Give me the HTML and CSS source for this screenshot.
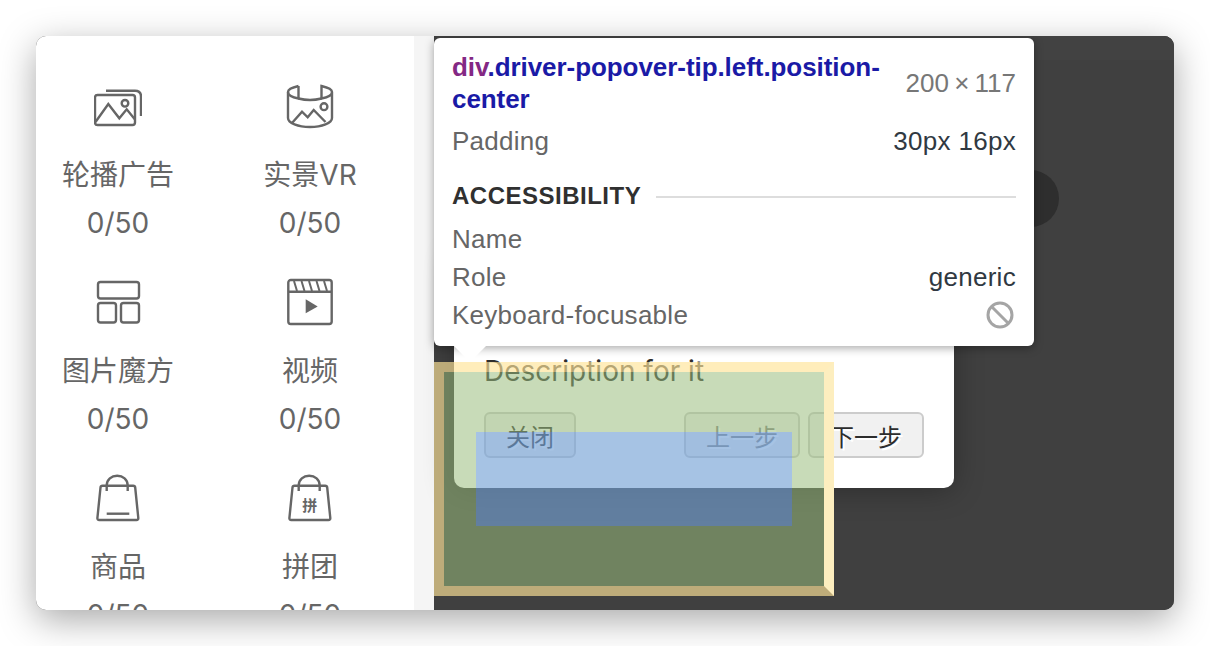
FILE: index.html
```html
<!DOCTYPE html>
<html lang="zh">
<head>
<meta charset="utf-8">
<title>Driver popover inspector</title>
<link rel="stylesheet" href="styles.css">
</head>
<body>
<div class="window">
  <aside class="sidebar">
    <div class="item">
      <svg class="icon" viewBox="0 0 48 48"><rect x="1" y="13" width="40" height="30" rx="2.5"/><path d="M12 8.7H41Q47 8.7 47 14.5V34"/><path d="M1.5 40L14.3 22L25.3 36.3L32.7 27.3L41 37.5"/><circle cx="31" cy="21.3" r="3.3"/></svg>
      <div class="label">轮播广告</div><div class="count">0/50</div>
    </div>
    <div class="item">
      <svg class="icon" viewBox="0 0 48 48"><path d="M12.5 4C6 5.5 2 7.5 2 10V36C2 41 12 45 24 45S46 41 46 36V10C46 7.5 42 5.5 35.5 4V16.5C41 15.5 46 13 46 10"/><path d="M2 10C2 13 7 15.5 12.5 16.5V4"/><path d="M12.5 16.5C20 18.5 28 18.5 35.5 16.5"/><path d="M6 41L16 29.7L21.7 35.3L27.7 28L39.5 40"/><circle cx="38" cy="24.7" r="3.4"/></svg>
      <div class="label">实景VR</div><div class="count">0/50</div>
    </div>
    <div class="item">
      <svg class="icon" viewBox="0 0 48 48"><rect x="4" y="4" width="41" height="16.5" rx="2.5"/><rect x="4" y="25" width="18" height="19.5" rx="2.5"/><rect x="27" y="25" width="18" height="19.5" rx="2.5"/></svg>
      <div class="label">图片魔方</div><div class="count">0/50</div>
    </div>
    <div class="item">
      <svg class="icon" viewBox="0 0 48 48"><rect x="2.3" y="2" width="43.4" height="44" rx="2.5"/><path d="M2.3 13.7H45.7"/><path class="thin" d="M8 3L11 13M15.5 3L18.5 13M23 3L26 13M30.5 3L33.5 13M38 3L41 13"/><path class="solid" d="M19.7 21.3L31.7 28.5L19.7 35.3Z"/></svg>
      <div class="label">视频</div><div class="count">0/50</div>
    </div>
    <div class="item">
      <svg class="icon" viewBox="0 0 48 48"><path d="M8.5 11.7H39.2Q41 11.7 41.2 13.5L44.3 44Q44.4 46 42.5 46H5.3Q3.2 46 3.4 44L6.5 13.5Q6.7 11.7 8.5 11.7Z"/><path d="M12.7 17V11.5C12.7 5.5 17.5 1.7 23.2 1.7S33.7 5.5 33.7 11.5V17"/><path d="M12.7 39.7H35.3"/></svg>
      <div class="label">商品</div><div class="count">0/50</div>
    </div>
    <div class="item">
      <svg class="icon" viewBox="0 0 48 48"><path d="M8.5 11.7H39.2Q41 11.7 41.2 13.5L44.3 44Q44.4 46 42.5 46H5.3Q3.2 46 3.4 44L6.5 13.5Q6.7 11.7 8.5 11.7Z"/><path d="M12.7 17V11.5C12.7 5.5 17.5 1.7 23.2 1.7S33.7 5.5 33.7 11.5V17"/><text class="glyph" x="23.8" y="37" text-anchor="middle">拼</text></svg>
      <div class="label">拼团</div><div class="count">0/50</div>
    </div>
  </aside>
  <div class="gutter"></div>
  <main class="canvas">
    <div class="topbar"></div>
    <div class="circle"></div>
    <div class="popover">
      <p class="desc">Description for it</p>
      <div class="footer">
        <button class="btn btn-close">关闭</button>
        <span class="spacer"></span>
        <button class="btn btn-prev">上一步</button>
        <button class="btn btn-next">下一步</button>
      </div>
    </div>
  </main>
  <div class="highlight"><div class="hl-padding"><div class="hl-content"></div></div></div>
  <div class="tooltip">
    <div class="tip-head">
      <div class="tip-title"><span class="tag">div</span>.driver-popover-tip.left.position-center</div>
      <div class="tip-size">200&#8201;×&#8201;117</div>
    </div>
    <div class="tip-row"><span class="key">Padding</span><span class="val">30px 16px</span></div>
    <div class="tip-section"><span class="section-name">ACCESSIBILITY</span><span class="rule"></span></div>
    <div class="tip-row"><span class="key">Name</span></div>
    <div class="tip-row"><span class="key">Role</span><span class="val">generic</span></div>
    <div class="tip-row"><span class="key">Keyboard-focusable</span>
      <svg class="no-icon" viewBox="0 0 28 28"><circle cx="14" cy="14" r="12"/><path d="M5.5 5.5L22.5 22.5"/></svg>
    </div>
  </div>
</div>
</body>
</html>
```
FILE: styles.css
```css
* { box-sizing: border-box; }
html, body { margin: 0; height: 100%; background: #fff; overflow: hidden; }
body { padding: 36px; font-family: Inter, "Noto Sans CJK SC", sans-serif; }

.window {
  position: relative;
  display: flex;
  width: 1138px;
  height: 574px;
  border-radius: 10px;
  overflow: hidden;
  background: #404040;
  box-shadow: 0 10px 36px rgba(0, 0, 0, .34);
}

.sidebar {
  flex: 0 0 378px;
  display: grid;
  grid-template-columns: 164px 164px;
  grid-auto-rows: 164px;
  column-gap: 28px;
  row-gap: 32px;
  padding-top: 46px;
  background: #fff;
  overflow: hidden;
}
.item { display: flex; flex-direction: column; align-items: center; color: #666; }
.icon { width: 48px; height: 48px; margin-bottom: 20px; flex: none; fill: none; stroke: #666; stroke-width: 2.4; }
.icon .thin { stroke-width: 2; }
.icon .solid { fill: #666; stroke: none; }
.icon .glyph { fill: #666; stroke: none; font: 700 15px "Noto Sans CJK SC", sans-serif; }
.label { height: 48px; flex: none; font-size: 28px; line-height: 50px; white-space: nowrap; }
.count { height: 48px; flex: none; font-size: 28px; line-height: 50px; }

.gutter { flex: 0 0 20px; background: #f5f5f5; }
.canvas { position: relative; flex: 1; background: #404040; }
.topbar { height: 24px; background: #424242; }
.circle {
  position: absolute;
  left: 568px;
  top: 134px;
  width: 57px;
  height: 57px;
  border-radius: 50%;
  background: #2e2e2e;
}
.popover {
  position: absolute;
  left: 20px;
  top: 214px;
  display: flex;
  flex-direction: column;
  justify-content: flex-end;
  width: 500px;
  height: 238px;
  padding: 30px;
  border-radius: 10px;
  background: #fff;
  box-shadow: 0 2px 30px rgba(0, 0, 0, .3);
}
.desc { margin: 0 0 23px; font-size: 28px; line-height: 36px; color: #2d2d2d; }
.footer { display: flex; gap: 8px; }
.spacer { flex: 1; }
.btn {
  height: 46px;
  padding: 0;
  border: 2px solid #ccc;
  border-radius: 6px;
  background: #f1f1f1;
  color: #2d2d2d;
  font: 24px "Noto Sans CJK SC", sans-serif;
  text-shadow: 2px 2px 0 #fff;
}
.btn-close { width: 92px; }
.btn-prev { width: 116px; color: #808080; }
.btn-next { width: 116px; }

.highlight {
  position: absolute;
  left: 398px;
  top: 326px;
  width: 400px;
  height: 234px;
  border-style: solid;
  border-width: 10px;
  border-color: rgba(255, 229, 153, .66) #fdeebf rgba(255, 229, 153, .66) rgba(255, 229, 153, .66);
}
.hl-padding {
  width: 100%;
  height: 100%;
  border-style: solid;
  border-width: 60px 32px;
  border-color: rgba(154, 188, 124, .54);
}
.hl-content { width: 100%; height: 100%; background: rgba(117, 161, 213, .644); }

.tooltip {
  position: absolute;
  left: 398px;
  top: 2px;
  width: 600px;
  height: 308px;
  padding: 13px 18px 12px;
  border-radius: 6px;
  background: #fff;
  box-shadow: 0 2px 10px rgba(0, 0, 0, .35);
  font-family: "Liberation Sans", Arial, sans-serif;
  font-size: 26px;
}
.tooltip::after {
  content: "";
  position: absolute;
  left: 20px;
  top: 100%;
  border-style: solid;
  border-width: 16px 16px 0;
  border-color: #fff transparent transparent;
}
.tip-head { display: flex; align-items: center; justify-content: space-between; margin-bottom: 7px; }
.tip-title { width: 436px; font-weight: 700; line-height: 32px; letter-spacing: -.06px; color: #1a1aa6; }
.tag { color: #842884; }
.tip-size { color: #777; white-space: nowrap; }
.tip-row { display: flex; align-items: center; justify-content: space-between; height: 38px; }
.key { color: #666; letter-spacing: .27px; }
.val { color: #303942; letter-spacing: .3px; }
.tip-section { display: flex; align-items: center; gap: 15px; height: 38px; margin: 17px 0 5px; }
.section-name { font-size: 24px; font-weight: 700; letter-spacing: .5px; color: #303030; }
.rule { flex: 1; height: 2px; margin-top: 2px; background: #ddd; }
.no-icon { width: 28px; height: 28px; margin-right: 2px; fill: none; stroke: #a5a5a5; stroke-width: 3; }
```
